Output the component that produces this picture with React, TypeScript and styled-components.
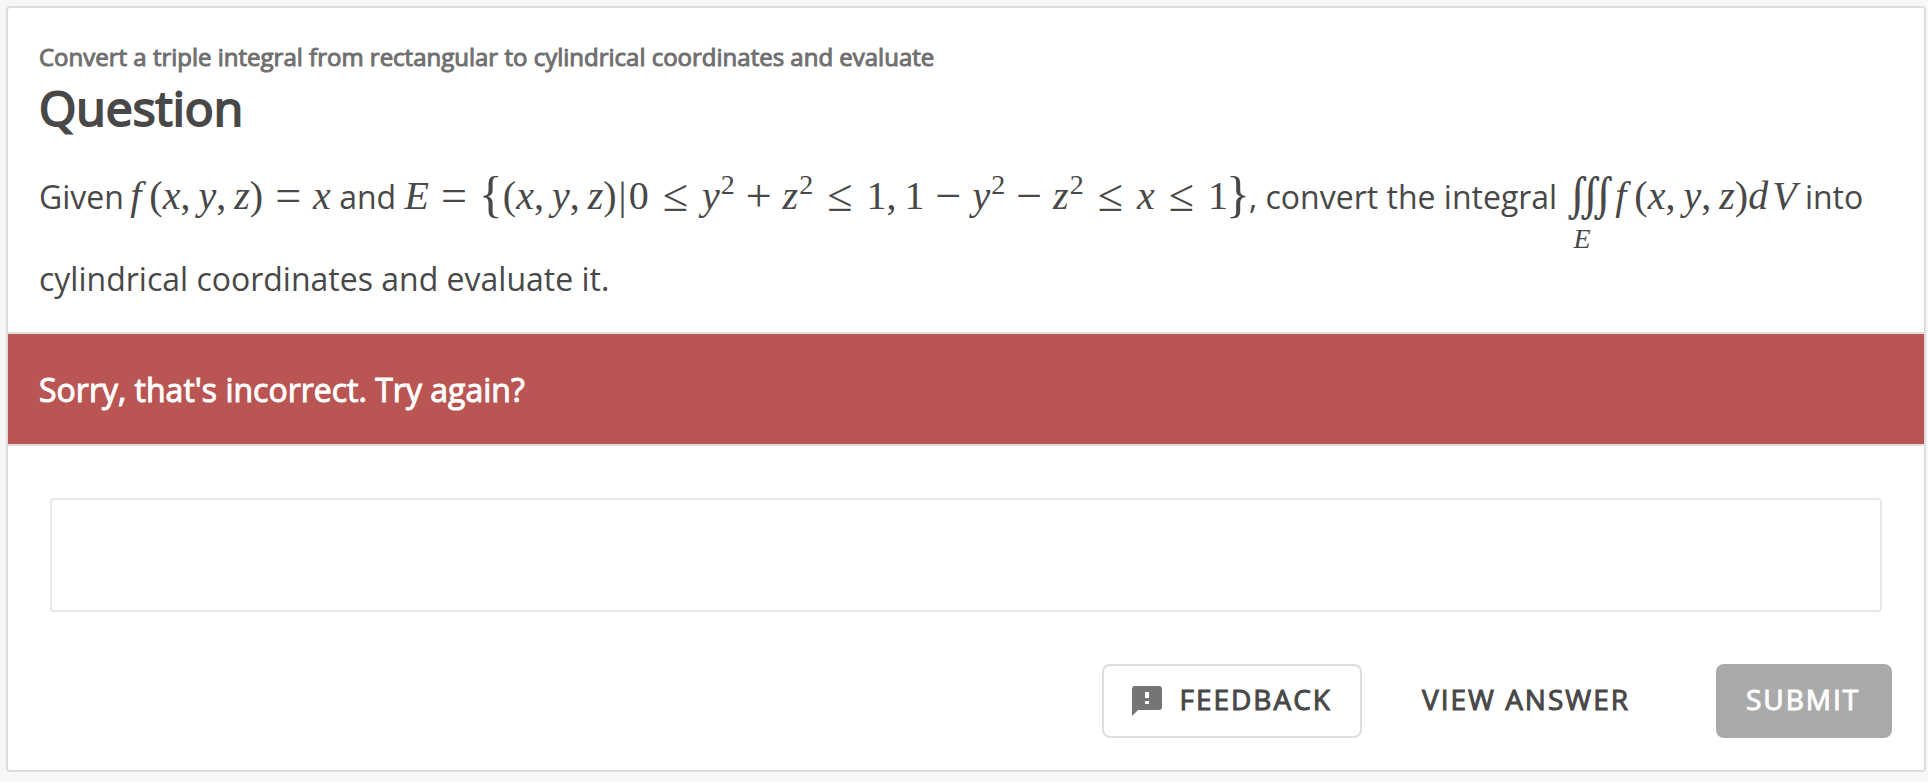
import React from "react";
import styled, { createGlobalStyle, css } from "styled-components";

const GlobalStyle = createGlobalStyle`
  *, *::before, *::after { box-sizing: border-box; }
  body {
    margin: 0;
    background: #f7f7f7;
    color: #484848;
    font-family: "Open Sans", "Noto Sans", sans-serif;
  }
`;

const Page = styled.main`
  padding: 6px 2px 10px 6px;
`;

const Card = styled.article`
  background: #fff;
  border: 2px solid #ddd;
  border-radius: 4px;
`;

const Prompt = styled.section`
  padding: 32px 31px 12px;
`;

const Objective = styled.p`
  margin: 0;
  font-size: 24px;
  line-height: 34px;
  color: #707070;
  -webkit-text-stroke: 1px currentColor;
`;

const Title = styled.h1`
  margin: 0;
  font-size: 48px;
  font-weight: 400;
  line-height: 68px;
  -webkit-text-stroke: 2px currentColor;
`;

const Statement = styled.p`
  margin: 14px 0 0;
  font-size: 32px;
  line-height: 82px;
`;

const Formula = styled.span`
  font-family: "Liberation Serif", "Times New Roman", serif;
  font-size: 40px;
  line-height: 40px;
  white-space: nowrap;
`;

const Var = styled.i<{ $name?: "function" | "volume" }>`
  font-style: italic;
  ${(p) => p.$name === "function" && css`margin: 0 8px 0 -2px;`}
  ${(p) => p.$name === "volume" && css`margin-left: 4px;`}
`;

const Comma = styled.span`
  margin-right: 8px;
`;

const Operator = styled.span<{ $gap: number }>`
  font-size: 46px;
  vertical-align: -2px;
  margin: 0 ${(p) => p.$gap}px;
`;

const Power = styled.sup`
  font-size: 28px;
  line-height: 28px;
  vertical-align: 15px;
  margin-left: 1px;
`;

const Brace = styled.span<{ $side: "left" | "right" }>`
  font-size: 50px;
  line-height: 40px;
  vertical-align: -2px;
  ${(p) => p.$side === "right" && css`margin: 0 -1px 0 -2px;`}
`;

const Bar = styled.span`
  margin: 0 2px;
`;

const Integral = styled.span`
  display: inline-flex;
  flex-direction: column;
  margin: 0 2px -24px 0;
`;

const IntegralSign = styled.span`
  font-family: "DejaVu Math TeX Gyre", "Liberation Serif", serif;
  font-size: 40px;
  line-height: 40px;
`;

const Region = styled.i`
  font-size: 28px;
  line-height: 44px;
  padding-left: 8px;
`;

const Alert = styled.div`
  padding: 33px 31px 31px;
  border: solid #ddd;
  border-width: 2px 0;
  background: #b95552;
  color: #fff;
  font-size: 32px;
  line-height: 46px;
  -webkit-text-stroke: 1px currentColor;
`;

const AnswerForm = styled.form`
  padding: 52px 32px 32px;
`;

const AnswerRow = styled.div`
  padding: 0 10px;
`;

const AnswerInput = styled.input`
  display: block;
  width: 100%;
  height: 114px;
  padding: 0 24px;
  border: 2px solid #e7e7e7;
  border-radius: 4px;
  background: #fff;
  color: inherit;
  font: inherit;
  font-size: 32px;
`;

const Actions = styled.div`
  display: flex;
  justify-content: flex-end;
  margin-top: 52px;
`;

const Button = styled.button<{ $kind: "outline" | "text" | "filled" }>`
  display: flex;
  align-items: center;
  gap: 17px;
  height: 74px;
  padding: 0 28px 4px;
  border: 2px solid transparent;
  border-radius: 8px;
  background: transparent;
  color: #484848;
  font-family: inherit;
  font-size: 28px;
  letter-spacing: 2px;
  -webkit-text-stroke: 1px currentColor;
  ${(p) => p.$kind === "outline" && css`border-color: #ddd;`}
  ${(p) => p.$kind === "text" && css`margin: 0 56px 0 30px;`}
  ${(p) => p.$kind === "filled" && css`min-width: 176px; background: #aaa; color: #fff;`}
`;

const Icon = styled.svg`
  margin-top: 4px;
`;

const FeedbackIcon = () => (
  <Icon width="30" height="30" viewBox="0 0 30 30" aria-hidden="true">
    <path
      fill="#757575"
      fillRule="evenodd"
      d="M3 0H27A3 3 0 0 1 30 3V21A3 3 0 0 1 27 24H6L0 30V3A3 3 0 0 1 3 0ZM13 6V12H17V6ZM13 15V18H17V15Z"
    />
  </Icon>
);

const Arguments = () => (
  <>
    (<Var>x</Var><Comma>,</Comma><Var>y</Var><Comma>,</Comma><Var>z</Var>)
  </>
);

const Squared = ({ name }: { name: string }) => (
  <>
    <Var>{name}</Var><Power>2</Power>
  </>
);

const Equals = () => <Operator $gap={12}>=</Operator>;
const AtMost = () => <Operator $gap={14}>≤</Operator>;
const Plus = () => <Operator $gap={11}>+</Operator>;
const Minus = () => <Operator $gap={11}>−</Operator>;

export default function App() {
  return (
    <>
      <GlobalStyle />
      <Page>
        <Card>
          <Prompt>
            <Objective>
              Convert a triple integral from rectangular to cylindrical coordinates and evaluate
            </Objective>
            <Title>Question</Title>
            <Statement>
              Given{" "}
              <Formula>
                <Var $name="function">f</Var><Arguments /><Equals /><Var>x</Var>
              </Formula>{" "}
              and{" "}
              <Formula>
                <Var>E</Var><Equals /><Brace $side="left">{"{"}</Brace><Arguments />
                <Bar>|</Bar>0<AtMost /><Squared name="y" /><Plus />
                <Squared name="z" /><AtMost />1<Comma>,</Comma>1<Minus />
                <Squared name="y" /><Minus /><Squared name="z" />
                <AtMost /><Var>x</Var><AtMost />1<Brace $side="right">{"}"}</Brace>
              </Formula>
              <span>, convert the integral</span>{" "}
              <Formula>
                <Integral>
                  <IntegralSign>∭</IntegralSign>
                  <Region>E</Region>
                </Integral>
                <Var $name="function">f</Var><Arguments /><Var>d</Var><Var $name="volume">V</Var>
              </Formula>{" "}
              <span>into</span>{" "}
              <span>cylindrical coordinates and evaluate it.</span>
            </Statement>
          </Prompt>
          <Alert role="alert">Sorry, that's incorrect. Try again?</Alert>
          <AnswerForm onSubmit={(e) => e.preventDefault()}>
            <AnswerRow>
              <AnswerInput type="text" aria-label="Your answer" />
            </AnswerRow>
            <Actions>
              <Button type="button" $kind="outline">
                <FeedbackIcon />
                FEEDBACK
              </Button>
              <Button type="button" $kind="text">VIEW ANSWER</Button>
              <Button type="submit" $kind="filled">SUBMIT</Button>
            </Actions>
          </AnswerForm>
        </Card>
      </Page>
    </>
  );
}
